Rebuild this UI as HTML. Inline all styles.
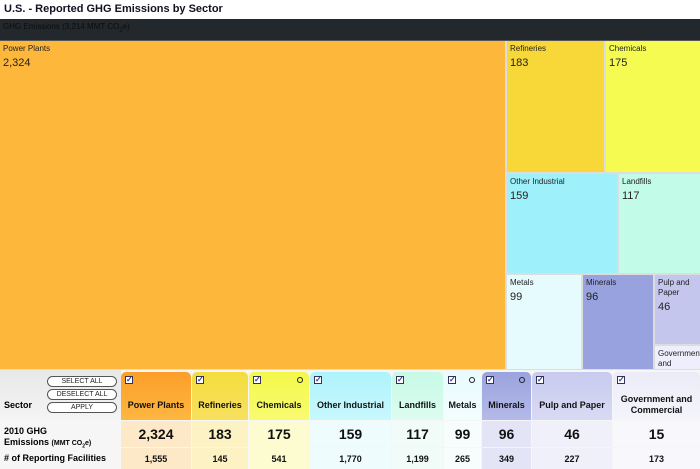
<!DOCTYPE html>
<html><head><style>
*{margin:0;padding:0;box-sizing:border-box}
body{width:700px;height:469px;overflow:hidden;background:#fff;font-family:"Liberation Sans",Arial,sans-serif;position:relative}
.a{position:absolute}
.t{font-size:8px;color:#222;padding:3px 0 0 3px;line-height:10px}
.t b{display:block;font-weight:normal;font-size:11px;margin-top:4px}
.cell{position:absolute;text-align:center;font-weight:bold;color:#111;display:flex;align-items:center;justify-content:center}
.cb{position:absolute;width:8px;height:8px;border:1px solid #335;background:#fff;top:4px;left:4px;font-size:8px;line-height:6px;color:#33a;font-weight:bold;text-align:center}
.btn{position:absolute;left:47px;width:70px;height:11px;border:1px solid #555;border-radius:6px;background:#fff;font-size:7px;text-align:center;line-height:9px;color:#222}
.dot{position:absolute;top:5px;right:6px;width:6px;height:6px;border:1.5px solid #222;border-radius:50%}
</style></head><body>
<div class="a" style="left:4px;top:3px;font-size:11px;font-weight:bold;color:#112">U.S. - Reported GHG Emissions by Sector</div>
<div class="a" style="left:0;top:19px;width:700px;height:22px;background:#23282c;border-bottom:1px solid #555"><div style="font-size:8px;color:#0c0c0c;padding:3px 3px">GHG Emissions (3,214 MMT CO<sub style="font-size:6px">2</sub>e)</div></div>
<div class="a" style="left:0;top:41px;width:700px;height:329px;background:#ddd"></div>
<div class="a t" style="left:0;top:41px;width:505px;height:328px;background:#fdb73a">Power Plants<b>2,324</b></div>
<div class="a t" style="left:507px;top:41px;width:97px;height:131px;background:#f8d838">Refineries<b>183</b></div>
<div class="a t" style="left:606px;top:41px;width:94px;height:131px;background:#f5fb50">Chemicals<b>175</b></div>
<div class="a t" style="left:507px;top:174px;width:110px;height:99px;background:#9ef1fb">Other Industrial<b>159</b></div>
<div class="a t" style="left:619px;top:174px;width:81px;height:99px;background:#c2fbe8">Landfills<b>117</b></div>
<div class="a t" style="left:507px;top:275px;width:74px;height:94px;background:#e6fbfd">Metals<b>99</b></div>
<div class="a t" style="left:583px;top:275px;width:70px;height:94px;background:#98a2de">Minerals<b>96</b></div>
<div class="a t" style="left:655px;top:275px;width:45px;height:69px;background:#c4c6ee">Pulp and Paper<b>46</b></div>
<div class="a t" style="left:655px;top:346px;width:45px;height:23px;background:#eeeefc">Government and</div>
<!-- table -->
<div class="a" style="left:0;top:370px;width:700px;height:99px;background:#f6f6f6"></div>
<div class="a" style="left:0;top:370px;width:121px;height:50px;background:linear-gradient(#e8e8e8,#f4f4f4)"></div>
<div class="a" style="left:4px;top:400px;font-size:9px;font-weight:bold">Sector</div>
<div class="btn" style="top:376px">SELECT ALL</div>
<div class="btn" style="top:389px">DESELECT ALL</div>
<div class="btn" style="top:402px">APPLY</div>
<div class="a" style="left:4px;top:426px;font-size:9px;font-weight:bold;line-height:11px">2010 GHG<br>Emissions <span style="font-size:7px">(MMT CO<sub style="font-size:5px">2</sub>e)</span></div>
<div class="a" style="left:4px;top:453px;font-size:9px;font-weight:bold"># of Reporting Facilities</div>
<div id="cols"></div>
<script>
var c=[["Power Plants",121,70,"#fc9f2a","#fdb740","#fde8c8","2,324","1,555",0],
["Refineries",192,56,"#f4dd3c","#f8e060","#fdf2c4","183","145",0],
["Chemicals",249,60,"#f4f84a","#f8fb70","#fcfcd0","175","541",1],
["Other Industrial",310,81,"#aef3fb","#c8f8fd","#eefcfe","159","1,770",0],
["Landfills",392,51,"#c6fae6","#dcfcef","#f1fcf8","117","1,199",0],
["Metals",444,37,"#e8fbfd","#f3fdfe","#f7fcfd","99","265",1],
["Minerals",482,49,"#9aa3de","#b4bae8","#e3e5f6","96","349",1],
["Pulp and Paper",532,80,"#c8caf0","#d8daf4","#f0f0fa","46","227",0],
["Government and<br>Commercial",613,87,"#ececf8","#f4f4fb","#f8f8fc","15","173",0]];
var h="";
c.forEach(function(d){
h+='<div class="a" style="left:'+d[1]+'px;top:372px;width:'+d[2]+'px;height:48px;border-radius:5px 5px 0 0;background:linear-gradient('+d[3]+','+d[4]+')"><div class="cb">✓</div>'+(d[8]?'<div class="dot"></div>':'')+'</div>';
h+='<div class="cell" style="left:'+d[1]+'px;top:390px;width:'+d[2]+'px;height:30px;font-size:9px;line-height:11px">'+d[0]+'</div>';
h+='<div class="cell" style="left:'+d[1]+'px;top:421px;width:'+d[2]+'px;height:26px;font-size:14px;background:'+d[5]+'">'+d[6]+'</div>';
h+='<div class="cell" style="left:'+d[1]+'px;top:448px;width:'+d[2]+'px;height:21px;font-size:9px;background:'+d[5]+'">'+d[7]+'</div>';
});
document.getElementById("cols").innerHTML=h;
</script>
</body></html>
